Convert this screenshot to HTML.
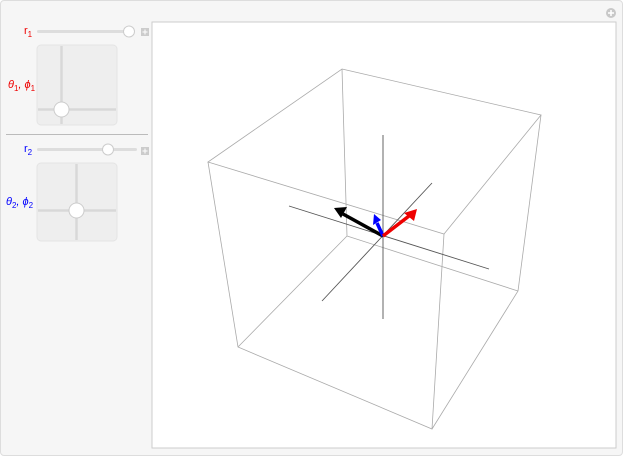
<!DOCTYPE html>
<html><head><style>
body{margin:0;width:623px;height:456px;background:#fff;font-family:"Liberation Sans",sans-serif;overflow:hidden}
.frame{position:absolute;left:0;top:0;width:621px;height:454px;border:1px solid #ddd;border-radius:4px;background:#f6f6f6}
.lbl{position:absolute;font-size:11px;font-style:italic}
</style></head><body>
<div class="frame"></div>
<svg width="623" height="456" style="position:absolute;left:0;top:0">
<circle cx="611" cy="13" r="5" fill="#c8c8c8"/><path d="M608 13h6M611 10v6" stroke="#fff" stroke-width="1.5"/>
<rect x="152" y="22" width="464" height="426" fill="#fff" stroke="#ccc"/>
<rect x="37" y="30" width="96" height="3" rx="1.5" fill="#ddd"/>
<circle cx="129" cy="31.5" r="5.5" fill="#fff" stroke="#ccc"/>
<rect x="141" y="28" width="8" height="8" fill="#ccc"/><path d="M142.5 32h5M145 29.5v5" stroke="#fff"/>
<rect x="37" y="45" width="80" height="80" rx="4" fill="#eee" stroke="#e4e4e4"/>
<path d="M61.5 46v78M38 109.5h78" stroke="#d8d8d8" stroke-width="2.5"/>
<circle cx="61.5" cy="109.5" r="7.5" fill="#fff" stroke="#ccc"/>
<line x1="6" y1="134.5" x2="148" y2="134.5" stroke="#bbb"/>
<rect x="37" y="148" width="100" height="3" rx="1.5" fill="#ddd"/>
<circle cx="108" cy="149.5" r="5.5" fill="#fff" stroke="#ccc"/>
<rect x="141" y="147" width="8" height="8" fill="#ccc"/><path d="M142.5 151h5M145 148.5v5" stroke="#fff"/>
<rect x="37" y="163" width="80" height="78" rx="4" fill="#eee" stroke="#e4e4e4"/>
<path d="M76.5 164v76M38 210.5h78" stroke="#d8d8d8" stroke-width="2.5"/>
<circle cx="76.5" cy="210.5" r="7.5" fill="#fff" stroke="#ccc"/>
<g stroke="#aaa" stroke-width="0.8" fill="none">
<path d="M342 69L541 115L444 234L208 162Z"/>
<path d="M208 162L238 347L432 429L444 234M432 429L518 291L541 115"/>
<path d="M342 69L347 236L238 347M347 236L518 291"/>
</g>
<g stroke="#555" stroke-width="0.9">
<line x1="383" y1="135" x2="383" y2="319"/>
<line x1="289" y1="206" x2="489" y2="269"/>
<line x1="432" y1="183" x2="322" y2="301"/>
</g>
<line x1="383" y1="236" x2="343" y2="214" stroke="#000" stroke-width="3.5"/>
<polygon points="334,208 347,207 341,218" fill="#000"/>
<line x1="383" y1="236" x2="377" y2="223" stroke="#00f" stroke-width="3.5"/>
<polygon points="374,214 381,220 373,225" fill="#00f"/>
<line x1="383" y1="236" x2="409" y2="216" stroke="#e00" stroke-width="3.5"/>
<polygon points="417,209 414,221 404,213" fill="#e00"/>
</svg>
<div class="lbl" style="left:24px;top:25px;color:#e00;font-style:normal">r<sub style="font-size:8px">1</sub></div>
<div class="lbl" style="left:8px;top:79px;color:#e00">θ<sub style="font-size:8px;font-style:normal">1</sub>, ϕ<sub style="font-size:8px;font-style:normal">1</sub></div>
<div class="lbl" style="left:24px;top:143px;color:#00f;font-style:normal">r<sub style="font-size:8px">2</sub></div>
<div class="lbl" style="left:6px;top:196px;color:#00f">θ<sub style="font-size:8px;font-style:normal">2</sub>, ϕ<sub style="font-size:8px;font-style:normal">2</sub></div>
</body></html>
